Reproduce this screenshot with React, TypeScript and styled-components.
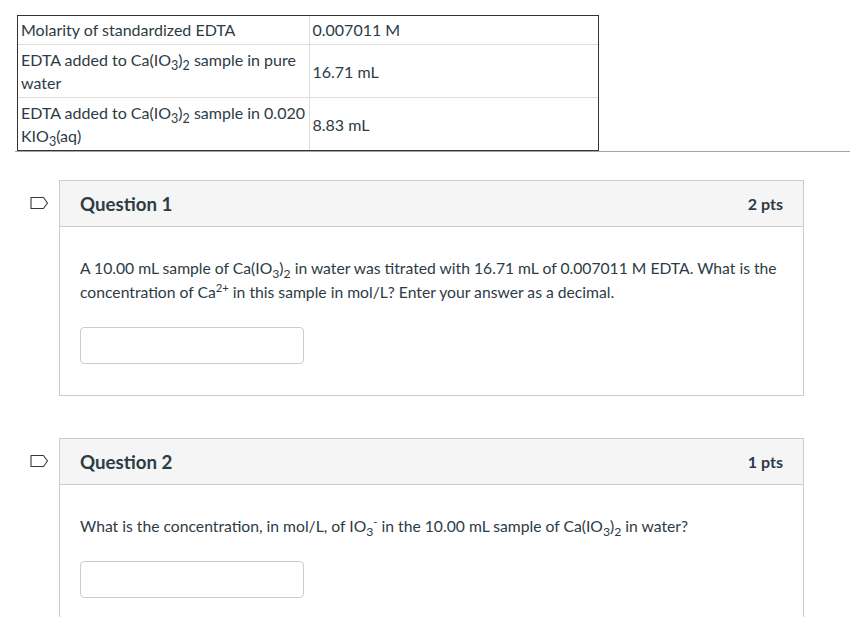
import React from "react";
import styled, { createGlobalStyle } from "styled-components";

const Global = createGlobalStyle`
  html, body { margin: 0; padding: 0; background: #fff; }
  body { font-family: Lato, "Open Sans", sans-serif; color: #2d3b45; }
`;

const Page = styled.div`
  width: 858px;
  padding-top: 15px;
`;

const TableWrap = styled.div`
  margin-left: 17px;
  width: 582px;
  box-sizing: border-box;
  border: 1px solid #333;
`;

const DataTable = styled.table`
  border-collapse: collapse;
  border-style: hidden;
  width: 100%;
  table-layout: fixed;
  font-size: 16px;
  line-height: 23px;
  color: #2d3b45;
`;

const Cell = styled.td<{ $w?: number; $tall?: boolean }>`
  border: 1px solid #ddd;
  padding: ${(p) => (p.$tall ? "3px 3px" : "2px 3px 3px")};
  vertical-align: middle;
  box-sizing: border-box;
  width: ${(p) => (p.$w ? `${p.$w}px` : "auto")};
`;

const Rule = styled.hr`
  margin: 0 8px 0 15px;
  border: none;
  border-top: 1px solid #a5a5a5;
`;

const Questions = styled.div`
  display: flex;
  flex-direction: column;
  gap: 42px;
  padding-top: 28px;
`;

const QuestionRow = styled.div`
  display: flex;
  align-items: flex-start;
`;

const FlagCol = styled.div`
  width: 59px;
  display: flex;
  justify-content: flex-end;
  padding-top: 16px;
  box-sizing: border-box;
  padding-right: 10px;
`;

const Card = styled.div`
  width: 745px;
  border: 1px solid #c7cdd1;
  box-sizing: border-box;
`;

const CardHeader = styled.div`
  height: 45px;
  background: #f5f5f5;
  border-bottom: 1px solid #c7cdd1;
  display: flex;
  align-items: center;
  justify-content: space-between;
  padding: 0 20px;
  font-weight: 700;
`;

const Title = styled.span`
  font-size: 18.7px;
  color: #2d3b45;
`;

const Points = styled.span`
  font-size: 16px;
  color: #2d3b45;
`;

const CardBody = styled.div<{ $open?: boolean }>`
  padding: 29px 20px ${(p) => (p.$open ? "60px" : "31px")} 20px;
  font-size: 15.7px;
  line-height: 24px;
  color: #2d3b45;
`;

const Answer = styled.div`
  margin-top: 23px;
  width: 224px;
  height: 37px;
  border: 1px solid #c7cdd1;
  border-radius: 4px;
  box-sizing: border-box;
  background: #fff;
`;

const Sub = styled.sub`
  font-size: 0.78em;
  line-height: 0;
  vertical-align: -0.3em;
`;

const Sup = styled.sup`
  font-size: 0.72em;
  line-height: 0;
  vertical-align: 0.55em;
`;

const Flag = () => (
  <svg width="19" height="14" viewBox="0 0 19 14" fill="none">
    <path d="M1 1.5 H13.5 L17.5 7 L13.5 12.5 H1 Z" stroke="#2d3b45" strokeWidth="1.1" strokeLinejoin="round" />
  </svg>
);

const CaIO32 = () => (
  <>
    Ca(IO<Sub>3</Sub>)<Sub>2</Sub>
  </>
);

export default function App() {
  return (
    <Page>
      <Global />
      <TableWrap>
        <DataTable>
          <tbody>
            <tr>
              <Cell $w={291}>Molarity of standardized EDTA</Cell>
              <Cell>0.007011 M</Cell>
            </tr>
            <tr>
              <Cell $w={291} $tall>
                EDTA added to <CaIO32 /> sample in pure water
              </Cell>
              <Cell $tall>16.71 mL</Cell>
            </tr>
            <tr>
              <Cell $w={291} $tall>
                EDTA added to <CaIO32 /> sample in 0.020 KIO<Sub>3</Sub>(aq)
              </Cell>
              <Cell $tall>8.83 mL</Cell>
            </tr>
          </tbody>
        </DataTable>
      </TableWrap>
      <Rule />
      <Questions>
        <QuestionRow>
          <FlagCol>
            <Flag />
          </FlagCol>
          <Card>
            <CardHeader>
              <Title>Question 1</Title>
              <Points>2 pts</Points>
            </CardHeader>
            <CardBody>
              A 10.00 mL sample of <CaIO32 /> in water was titrated with 16.71 mL of 0.007011 M EDTA. What is the
              concentration of Ca<Sup>2+</Sup> in this sample in mol/L? Enter your answer as a decimal.
              <Answer />
            </CardBody>
          </Card>
        </QuestionRow>
        <QuestionRow>
          <FlagCol>
            <Flag />
          </FlagCol>
          <Card>
            <CardHeader>
              <Title>Question 2</Title>
              <Points>1 pts</Points>
            </CardHeader>
            <CardBody $open>
              What is the concentration, in mol/L, of IO<Sub>3</Sub>
              <Sup>-</Sup> in the 10.00 mL sample of <CaIO32 /> in water?
              <Answer />
            </CardBody>
          </Card>
        </QuestionRow>
      </Questions>
    </Page>
  );
}
